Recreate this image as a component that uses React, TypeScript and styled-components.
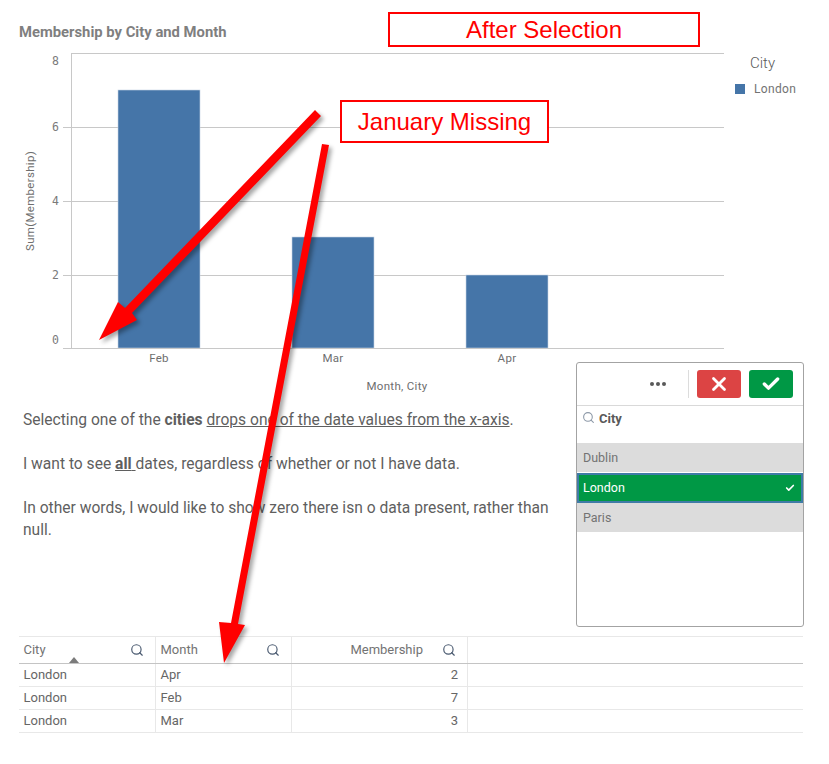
import React from 'react';
import styled, { createGlobalStyle } from 'styled-components';
import { Check, X, Search } from 'lucide-react';

const GlobalStyle = createGlobalStyle`
    html, body {
        margin: 0;
        padding: 0;
        background: #fff;
        font-family: Roboto, "Noto Sans", sans-serif;
    }
`;

const Page = styled.div`
    position: relative;
    width: 829px;
    height: 764px;
    overflow: hidden;
    background: #fff;
    color: #595959;
`;

const Title = styled.h1`
    margin: 0;
    height: 53px;
    box-sizing: border-box;
    padding: 23px 0 0 19px;
    font-size: 14.8px;
    line-height: 18px;
    font-weight: 700;
    color: #7f7f7f;
`;

const ChartRow = styled.div`
    display: flex;
    height: 345px;
    padding-left: 19px;
`;

const Chart = styled.svg`
    display: block;
    width: 705px;
    height: 345px;
    flex: none;
`;

const Legend = styled.div`
    padding: 0 0 0 11px;
`;

const LegendTitle = styled.div`
    padding-left: 15px;
    font-size: 15px;
    line-height: 20px;
    margin-bottom: 8px;
    color: #595959;
    font-weight: 300;
`;

const LegendItem = styled.div`
    display: flex;
    align-items: center;
    gap: 9px;
    font-size: 12px;
    line-height: 16px;
    color: #737373;
    letter-spacing: 0.35px;
`;

const Swatch = styled.span`
    width: 10px;
    height: 10px;
    background: #4575a8;
`;

const Notes = styled.div`
    height: 238px;
    box-sizing: border-box;
    width: 560px;
    padding: 11px 0 0 23px;
    font-size: 15.6px;
    line-height: 22px;
    color: #5f5f5f;
`;

const Para = styled.p`
    margin: 0 0 22px;
`;

const Underlined = styled.span`
    text-decoration: underline;
`;

const Table = styled.div`
    margin-left: 19px;
    width: 784px;
    border-top: 1px solid #e8e8e8;
`;

const TableRow = styled.div<{ $head?: boolean }>`
    display: grid;
    grid-template-columns: 137px 136px 176px 1fr;
    height: ${p => (p.$head ? 26 : 22)}px;
    border-bottom: ${p => (p.$head ? '1px solid #c4c4c4' : '1px solid #e8e8e8')};
    font-size: 13px;
    line-height: 22px;
    color: #666;
`;

const Cell = styled.div<{ $right?: boolean }>`
    position: relative;
    display: flex;
    align-items: center;
    justify-content: ${p => (p.$right ? 'flex-end' : 'flex-start')};
    padding: 0 9px 0 4.5px;
    border-right: 1px solid #e8e8e8;
`;

const HeadCell = styled(Cell)`
    justify-content: space-between;
    padding: 0 11px 0 4.5px;
    color: #737373;
`;

const HeadLabelRight = styled.span`
    margin-left: auto;
    margin-right: 19px;
`;

const SortMark = styled.span`
    position: absolute;
    left: 50px;
    bottom: 0;
    border-left: 5px solid transparent;
    border-right: 5px solid transparent;
    border-bottom: 6px solid #7b7b7b;
`;

const SearchIcon = styled(Search)`
    width: 14px;
    height: 14px;
    color: #4a5a70;
    flex: none;
`;

const FilterPanel = styled.div`
    position: absolute;
    left: 576px;
    top: 362px;
    width: 228px;
    height: 265px;
    box-sizing: border-box;
    border: 1px solid #a3a3a3;
    border-radius: 3px;
    background: #fff;
`;

const FilterToolbar = styled.div`
    height: 43px;
    box-sizing: border-box;
    display: flex;
    align-items: center;
    justify-content: flex-end;
    padding: 0 10px 1px 0;
    border-bottom: 1px solid #d9d9d9;
`;

const Dots = styled.span`
    display: flex;
    gap: 2px;
    margin-right: 22px;
`;

const Dot = styled.i`
    width: 4px;
    height: 4px;
    border-radius: 50%;
    background: #595959;
`;

const Divider = styled.span`
    width: 1px;
    height: 28px;
    background: #dcdcdc;
    margin-right: 8px;
`;

const ToolButton = styled.button<{ $bg: string }>`
    width: 44px;
    height: 28px;
    padding: 0;
    border: 0;
    border-radius: 3px;
    background: ${p => p.$bg};
    color: #fff;
    display: flex;
    align-items: center;
    justify-content: center;
    & + & {
        margin-left: 8px;
    }
`;

const FilterSearch = styled.div`
    height: 37px;
    box-sizing: border-box;
    display: flex;
    align-items: flex-start;
    gap: 4px;
    padding: 5px 0 0 5px;
    font-size: 13px;
    line-height: 15px;
    font-weight: 700;
    color: #595959;
`;

const FilterSearchIcon = styled(Search)`
    width: 13px;
    height: 13px;
    color: #8d99a8;
    flex: none;
`;

const FilterItem = styled.div<{ $selected?: boolean }>`
    height: ${p => (p.$selected ? 30 : 29)}px;
    box-sizing: border-box;
    display: flex;
    align-items: center;
    justify-content: space-between;
    margin-bottom: ${p => (p.$selected ? 0 : 1)}px;
    padding: ${p => (p.$selected ? '0 6px 1px 4px' : '0 6px')};
    font-size: 12.5px;
    background: ${p => (p.$selected ? '#009845' : '#dcdcdc')};
    color: ${p => (p.$selected ? '#fff' : '#737373')};
    border: ${p => (p.$selected ? '2px solid #3f7ba6' : '0')};
`;

const Callout = styled.div<{ $left: number; $top: number; $width: number; $height: number }>`
    position: absolute;
    left: ${p => p.$left}px;
    top: ${p => p.$top}px;
    width: ${p => p.$width}px;
    height: ${p => p.$height}px;
    box-sizing: border-box;
    border: 2px solid #ff0000;
    background: #fff;
    color: #ff0000;
    font-family: "Liberation Sans", Arial, sans-serif;
    font-size: 24px;
    display: flex;
    align-items: center;
    justify-content: center;
`;

const ArrowLayer = styled.svg`
    position: absolute;
    left: 0;
    top: 0;
    width: 829px;
    height: 764px;
    pointer-events: none;
    filter: drop-shadow(3px 3px 2px rgba(0, 0, 0, 0.35));
`;

const gridLines = [53, 127, 201, 275];
const ticks = [
    { y: 61, label: '8' },
    { y: 127, label: '6' },
    { y: 201, label: '4' },
    { y: 275, label: '2' },
    { y: 340, label: '0' },
];
const bars = [
    { x: 118, y: 90, name: 'Feb' },
    { x: 292, y: 237, name: 'Mar' },
    { x: 466, y: 275, name: 'Apr' },
];
const rows = [
    ['London', 'Apr', '2'],
    ['London', 'Feb', '7'],
    ['London', 'Mar', '3'],
];

const tickFont = { fontFamily: '"DejaVu Sans Mono", monospace', fontSize: 11.5, fill: '#7a7a7a' };
const labelFont = { fontFamily: 'Roboto, sans-serif', fontSize: 11.5, fill: '#6e6e6e', letterSpacing: 0.3 };

export default function App() {
    return (
        <Page>
            <GlobalStyle />
            <Title>Membership by City and Month</Title>
            <ChartRow>
                <Chart viewBox="19 53 705 345">
                    {gridLines.map(y => (
                        <line key={y} x1={y === 53 ? 71 : 63} x2={724} y1={y + 0.5} y2={y + 0.5} stroke="#c8c8c8" />
                    ))}
                    <line x1={71.5} x2={71.5} y1={53} y2={348} stroke="#c8c8c8" />
                    {bars.map(b => (
                        <g key={b.name}>
                            <rect x={b.x} y={b.y} width={82} height={348 - b.y} fill="#4575a8" stroke="#c5d3e3" strokeWidth={0.6} />
                            <text x={b.x + 41} y={362} textAnchor="middle" {...labelFont}>{b.name}</text>
                        </g>
                    ))}
                    <line x1={63} x2={724} y1={348.5} y2={348.5} stroke="#c8c8c8" />
                    {ticks.map(t => (
                        <text key={t.label} x={59} y={t.y + 4} textAnchor="end" {...tickFont}>{t.label}</text>
                    ))}
                    <text transform="translate(34 201) rotate(-90)" textAnchor="middle" {...labelFont}>Sum(Membership)</text>
                    <text x={397} y={390} textAnchor="middle" {...labelFont}>Month, City</text>
                </Chart>
                <Legend>
                    <LegendTitle>City</LegendTitle>
                    <LegendItem>
                        <Swatch />
                        London
                    </LegendItem>
                </Legend>
            </ChartRow>
            <Notes>
                <Para>
                    Selecting one of the <b>cities</b> <Underlined>drops one of the date values from the x-axis</Underlined>.
                </Para>
                <Para>
                    I want to see <Underlined><b>all</b> </Underlined>dates, regardless of whether or not I have data.
                </Para>
                <Para>
                    In other words, I would like to show zero there isn o data present, rather than null.
                </Para>
            </Notes>
            <Table>
                <TableRow $head>
                    <HeadCell>
                        City
                        <SearchIcon />
                        <SortMark />
                    </HeadCell>
                    <HeadCell>
                        Month
                        <SearchIcon />
                    </HeadCell>
                    <HeadCell>
                        <HeadLabelRight>Membership</HeadLabelRight>
                        <SearchIcon />
                    </HeadCell>
                    <div />
                </TableRow>
                {rows.map(r => (
                    <TableRow key={r[1]}>
                        <Cell>{r[0]}</Cell>
                        <Cell>{r[1]}</Cell>
                        <Cell $right>{r[2]}</Cell>
                        <div />
                    </TableRow>
                ))}
            </Table>
            <FilterPanel>
                <FilterToolbar>
                    <Dots>
                        <Dot />
                        <Dot />
                        <Dot />
                    </Dots>
                    <Divider />
                    <ToolButton $bg="#dc4444">
                        <X size={22} strokeWidth={3} />
                    </ToolButton>
                    <ToolButton $bg="#009845">
                        <Check size={20} strokeWidth={4} />
                    </ToolButton>
                </FilterToolbar>
                <FilterSearch>
                    <FilterSearchIcon />
                    City
                </FilterSearch>
                <FilterItem>Dublin</FilterItem>
                <FilterItem $selected>
                    London
                    <Check size={10} strokeWidth={4} />
                </FilterItem>
                <FilterItem>Paris</FilterItem>
            </FilterPanel>
            <Callout $left={388} $top={12} $width={312} $height={35}>After Selection</Callout>
            <Callout $left={340} $top={100} $width={209} $height={43}>January Missing</Callout>
            <ArrowLayer viewBox="0 0 829 764">
                <polygon points="315,110 321,116 132,313 137,320 99,340 118,302 125,308" fill="#ff0000" />
                <polygon points="322,144 329,145 238,624 245,625 224,663 219,622 231,623" fill="#ff0000" />
            </ArrowLayer>
        </Page>
    );
}
